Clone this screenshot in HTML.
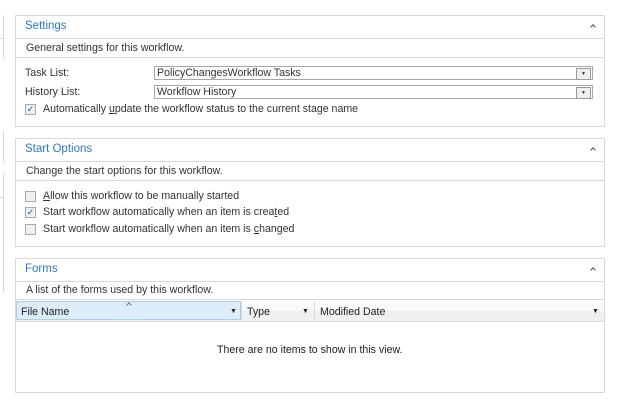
<!DOCTYPE html>
<html><head><style>
body{margin:0;width:640px;height:405px;background:#fff;font-family:"Liberation Sans","DejaVu Sans",sans-serif;color:#333;position:relative;overflow:hidden}
.p{position:absolute;left:15px;width:588px;border:1px solid #d6dbe0;background:#fff}
.h{height:22px;border-bottom:1px solid #d6dbe0;position:relative}
.h span{position:absolute;left:9px;top:4px;font-size:11.5px;color:#2f79c4}
.h i{position:absolute;right:9px;top:9px;width:3px;height:3px;border-left:1px solid #555;border-top:1px solid #555;transform:rotate(45deg)}
.d{height:18px;border-bottom:1px solid #d6dbe0;font-size:10.6px;line-height:18px;padding-left:10px;color:#333}
.t{position:absolute;font-size:10.6px;color:#333;white-space:nowrap}
.sel{position:absolute;left:154px;width:439px;height:14px;border:1px solid #a8a8a8;font-size:10.6px;line-height:13px;padding-left:2px;box-sizing:border-box}
.sel b{position:absolute;right:1px;top:1px;width:13px;height:10px;border:1px solid #999;background:#eee;font-size:5px;line-height:10px;text-align:center;font-weight:normal}
.cb{position:absolute;width:9px;height:9px;border:1px solid #aaa;background:#f0f0f0;font-size:9px;line-height:9px;text-align:center;color:#1a4f9c}
.edge{position:absolute;left:3px;width:1px;background:#d6dbe0}
.eh{position:absolute;left:0;width:3px;height:1px;background:#d6dbe0}
.ar{position:absolute;font-size:7px;color:#222}
</style></head><body>
<div class="edge" style="top:15px;height:44px"></div><div class="eh" style="top:38px"></div>
<div class="edge" style="top:130px;height:33px"></div>
<div class="edge" style="top:173px;height:77px"></div><div class="eh" style="top:197px"></div>
<div class="edge" style="top:250px;height:43px"></div>

<div class="p" style="top:15px;height:110px">
 <div class="h"><span>Settings</span><i></i></div>
 <div class="d">General settings for this workflow.</div>
</div>
<div class="t" style="left:25px;top:67px">Task List:</div>
<div class="sel" style="top:66px">PolicyChangesWorkflow Tasks<b>▼</b></div>
<div class="t" style="left:25px;top:86px">History List:</div>
<div class="sel" style="top:85px">Workflow History<b>▼</b></div>
<div class="cb" style="left:25px;top:104px">✓</div>
<div class="t" style="left:43px;top:103px">Automatically <u>u</u>pdate the workflow status to the current stage name</div>

<div class="p" style="top:138px;height:107px">
 <div class="h"><span>Start Options</span><i></i></div>
 <div class="d">Change the start options for this workflow.</div>
</div>
<div class="cb" style="left:25px;top:191px"></div>
<div class="t" style="left:43px;top:190px"><u>A</u>llow this workflow to be manually started</div>
<div class="cb" style="left:25px;top:207px">✓</div>
<div class="t" style="left:43px;top:206px">Start workflow automatically when an item is crea<u>t</u>ed</div>
<div class="cb" style="left:25px;top:224px"></div>
<div class="t" style="left:43px;top:223px">Start workflow automatically when an item is <u>c</u>hanged</div>

<div class="p" style="top:258px;height:133px">
 <div class="h"><span>Forms</span><i></i></div>
 <div class="d" style="height:17px;line-height:17px">A list of the forms used by this workflow.</div>
</div>
<div style="position:absolute;left:16px;top:301px;width:588px;height:20px;background:linear-gradient(#fafafa 50%,#eef0f2 50%);border-bottom:1px solid #d6dbe0"></div>
<div style="position:absolute;left:16px;top:301px;width:225px;height:19px;background:#dcecf8;border:1px solid #a9cfe9;box-sizing:border-box"></div>
<div style="position:absolute;left:241px;top:302px;width:1px;height:18px;background:#d6dbe0"></div>
<div style="position:absolute;left:314px;top:302px;width:1px;height:18px;background:#d6dbe0"></div>
<div style="position:absolute;left:127px;top:303px;width:3px;height:3px;border-left:1px solid #777;border-top:1px solid #777;transform:rotate(45deg)"></div>
<div class="t" style="left:21px;top:306px;color:#222">File Name</div>
<div class="ar" style="left:230px;top:308px">▼</div>
<div class="t" style="left:247px;top:306px;color:#222">Type</div>
<div class="ar" style="left:302px;top:308px">▼</div>
<div class="t" style="left:320px;top:306px;color:#222">Modified Date</div>
<div class="ar" style="left:592px;top:308px">▼</div>
<div class="t" style="left:217px;top:344px;color:#222">There are no items to show in this view.</div>
</body></html>
